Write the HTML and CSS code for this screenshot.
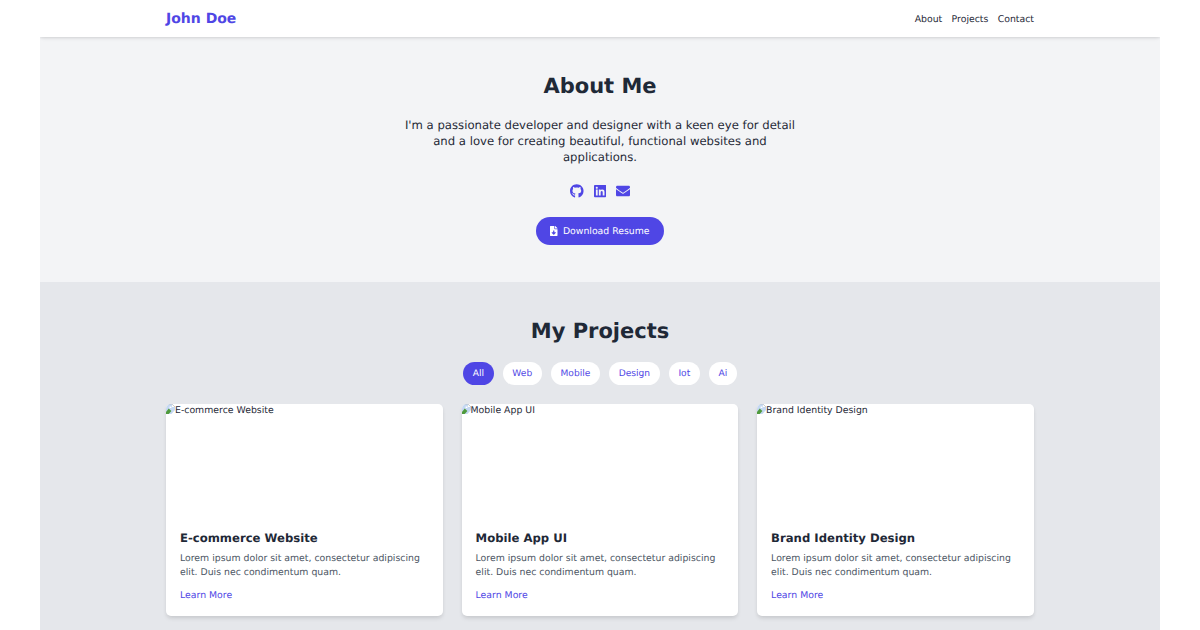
FILE: index.html
```html
<!DOCTYPE html>
<html lang="en">
<head>
    <meta charset="UTF-8">
    <meta name="viewport" content="width=device-width, initial-scale=1.0">
    <title>John Doe</title>
    <link rel="stylesheet" href="styles.css">
</head>
<body>
    <div class="page">
        <header class="navbar">
            <div class="container navbar-inner">
                <a class="brand" href="#">John Doe</a>
                <nav class="nav-links">
                    <a href="#">About</a>
                    <a href="#">Projects</a>
                    <a href="#">Contact</a>
                </nav>
            </div>
        </header>

        <section class="about">
            <h2 class="about-title">About Me</h2>
            <p class="about-text">I'm a passionate developer and designer with a keen eye for detail and a love for creating beautiful, functional websites and applications.</p>
            <div class="social">
                <a href="#"><svg class="icon-github" viewBox="0 0 496 512"><path d="M165.9 397.4c0 2-2.3 3.6-5.2 3.6-3.3 0-5.6-1.6-5.6-3.6 0-2 2.3-3.6 5.2-3.6 3-.3 5.6 1.3 5.6 3.6zm-31.1-4.5c-.7 2 1.3 4.3 4.3 4.9 2.6 1 5.6 0 6.2-2s-1.3-4.3-4.3-5.2c-2.6-.7-5.5.3-6.2 2.3zm44.2-1.7c-2.9.7-4.9 2.6-4.6 4.9.3 2 2.9 3.3 5.9 2.6 2.9-.7 4.9-2.6 4.6-4.6-.3-1.9-3-3.2-5.9-2.9zM244.8 8C106.1 8 0 113.3 0 252c0 110.9 69.8 205.8 169.5 239.2 12.8 2.3 17.3-5.6 17.3-12.1 0-6.2-.3-40.4-.3-61.4 0 0-70 15-84.7-29.8 0 0-11.4-29.1-27.8-36.6 0 0-22.9-15.7 1.6-16 0 0 24.9 2 38.6 25.8 21.9 38.6 58.6 27.5 72.9 20.9 2.3-16 8.8-27.1 16-33.7-55.9-6.2-112.3-14.3-112.3-110.5 0-27.5 7.6-41.3 23.6-58.9-2.6-6.5-11.1-33.3 2.6-67.9 20.9-6.5 69 27 69 27 20-5.6 41.5-8.5 62.8-8.5s42.8 2.9 62.8 8.5c0 0 48.1-33.6 69-27 13.7 34.7 5.2 61.4 2.6 67.9 16 17.7 25.8 31.5 25.8 58.9 0 96.5-58.9 104.2-114.8 110.5 9.2 7.9 17 22.9 17 46.4 0 33.7-.3 75.4-.3 83.6 0 6.5 4.6 14.4 17.3 12.1C428.2 457.8 496 362.9 496 252 496 113.3 383.5 8 244.8 8z"/></svg></a>
                <a href="#"><svg class="icon-linkedin" viewBox="0 0 448 512"><path d="M416 32H31.9C14.3 32 0 46.5 0 64.3v383.4C0 465.5 14.3 480 31.9 480H416c17.6 0 32-14.5 32-32.3V64.3c0-17.8-14.4-32.3-32-32.3zM135.4 416H69V202.2h66.5V416zm-33.2-243c-21.3 0-38.5-17.3-38.5-38.5S80.9 96 102.2 96c21.2 0 38.5 17.3 38.5 38.5 0 21.3-17.2 38.5-38.5 38.5zm282.1 243h-66.4V312c0-24.8-.5-56.7-34.5-56.7-34.6 0-39.9 27-39.9 54.9V416h-66.4V202.2h63.7v29.2h.9c8.9-16.8 30.6-34.5 62.9-34.5 67.2 0 79.7 44.3 79.7 101.9V416z"/></svg></a>
                <a href="#"><svg class="icon-mail" viewBox="0 0 512 512"><path d="M502.3 190.8c3.9-3.1 9.7-.2 9.7 4.7V400c0 26.5-21.5 48-48 48H48c-26.5 0-48-21.5-48-48V195.6c0-5 5.7-7.8 9.7-4.7 22.4 17.4 52.1 39.5 154.1 113.6 21.1 15.4 56.7 47.8 92.2 47.6 35.7.3 72-32.8 92.3-47.6 102-74.1 131.6-96.3 154-113.7zM256 320c23.2.4 56.6-29.2 73.4-41.4 132.7-96.3 142.8-104.7 173.4-128.7 5.8-4.5 9.2-11.5 9.2-18.9v-19c0-26.5-21.5-48-48-48H48C21.5 64 0 85.5 0 112v19c0 7.4 3.4 14.3 9.2 18.9 30.6 23.9 40.7 32.4 173.4 128.7 16.8 12.2 50.2 41.8 73.4 41.4z"/></svg></a>
            </div>
            <a class="resume-btn" href="#"><svg class="icon-file" viewBox="0 0 384 512"><path d="M224 136V0H24C10.7 0 0 10.7 0 24v464c0 13.3 10.7 24 24 24h336c13.3 0 24-10.7 24-24V160H248c-13.2 0-24-10.8-24-24zm76.45 211.36l-96.42 95.7c-6.65 6.61-17.39 6.61-24.04 0l-96.42-95.7C73.42 337.29 80.54 320 94.82 320H160v-80c0-8.84 7.16-16 16-16h32c8.84 0 16 7.16 16 16v80h65.18c14.28 0 21.4 17.29 11.27 27.36zM377 105L279.1 7c-4.5-4.5-10.6-7-17-7H256v128h128v-6.1c0-6.3-2.5-12.4-7-16.9z"/></svg><span class="resume-label">Download Resume</span></a>
        </section>

        <section class="projects">
            <h2 class="projects-title">My Projects</h2>
            <div class="filters">
                <button class="filter active">All</button>
                <button class="filter">Web</button>
                <button class="filter">Mobile</button>
                <button class="filter">Design</button>
                <button class="filter">Iot</button>
                <button class="filter">Ai</button>
            </div>
            <div class="container project-grid">
                <article class="card">
                    <div class="card-image"><svg class="broken" viewBox="0 0 10 10" preserveAspectRatio="none"><use href="#broken-img"/></svg>E-commerce Website</div>
                    <div class="card-body">
                        <h3>E-commerce Website</h3>
                        <p>Lorem ipsum dolor sit amet, consectetur adipiscing elit. Duis nec condimentum quam.</p>
                        <a href="#">Learn More</a>
                    </div>
                </article>
                <article class="card">
                    <div class="card-image"><svg class="broken" viewBox="0 0 10 10" preserveAspectRatio="none"><use href="#broken-img"/></svg>Mobile App UI</div>
                    <div class="card-body">
                        <h3>Mobile App UI</h3>
                        <p>Lorem ipsum dolor sit amet, consectetur adipiscing elit. Duis nec condimentum quam.</p>
                        <a href="#">Learn More</a>
                    </div>
                </article>
                <article class="card">
                    <div class="card-image"><svg class="broken" viewBox="0 0 10 10" preserveAspectRatio="none"><use href="#broken-img"/></svg>Brand Identity Design</div>
                    <div class="card-body">
                        <h3>Brand Identity Design</h3>
                        <p>Lorem ipsum dolor sit amet, consectetur adipiscing elit. Duis nec condimentum quam.</p>
                        <a href="#">Learn More</a>
                    </div>
                </article>
            </div>
        </section>
    </div>

    <!-- broken image glyph -->
    <svg class="defs" aria-hidden="true">
        <symbol id="broken-img" viewBox="0 0 10 10">
            <path d="M0 0h6.5l3.5 3v3L6 10H0z" fill="#c4d8f2"/>
            <path d="M6.5 0v3H10z" fill="#fff"/>
            <path d="M4 2.5h2v1.5H4z" fill="#fff"/>
            <path d="M0 8l3-3.5 3 2.5-3 3H0z" fill="#4f9a3c"/>
            <path d="M0 0h6.5l3.5 3" fill="none" stroke="#a8a8a8" stroke-width=".6"/>
        </symbol>
    </svg>
</body>
</html>
```

FILE: styles.css
```css
* {
    box-sizing: border-box;
}

body {
    margin: 0;
    background-color: white;
    color: #1f2937;
    font-family: "DejaVu Sans", sans-serif;
    font-size: 9.33px;
    text-rendering: geometricPrecision;
    overflow: hidden;
}

a {
    text-decoration: none;
}

.page {
    width: 1120px;
    margin: 0 auto;
    overflow: hidden;
}

.container {
    width: 868px;
    margin: 0 auto;
}

.defs {
    display: none;
}

/* navbar */
.navbar {
    position: relative;
    height: 37px;
    background-color: white;
    box-shadow: 0 2px 4px -1px rgba(0,0,0,0.1), 0 1px 2px rgba(0,0,0,0.06);
}

.navbar-inner {
    height: 37px;
    display: flex;
    align-items: center;
    justify-content: space-between;
}

.brand {
    color: #4f46e5;
    font-size: 14px;
    font-weight: bold;
}

.nav-links {
    display: flex;
    gap: 9.33px;
    padding-top: 1px;
}

.nav-links a {
    color: #1f2937;
}

/* about */
.about {
    height: 245px;
    background-color: #f3f4f6;
    padding-top: 35px;
    display: flex;
    flex-direction: column;
    align-items: center;
}

.about-title {
    margin: 0;
    font-size: 21px;
    line-height: 28px;
    font-weight: bold;
}

.about-text {
    width: 400px;
    margin: 17px 0 0;
    font-size: 11.67px;
    line-height: 16.2px;
    text-align: center;
}

.social {
    display: flex;
    align-items: center;
    gap: 10px;
    margin-top: 17px;
    height: 17px;
}

.social a {
    display: flex;
}

.social svg {
    height: 14px;
    fill: #4f46e5;
}

.resume-btn {
    display: flex;
    align-items: center;
    height: 28px;
    margin-top: 17px;
    padding: 0 14px;
    border-radius: 14px;
    background-color: #4f46e5;
    color: white;
}

.resume-label {
    padding-top: 1px;
}

.icon-file {
    height: 10px;
    margin-right: 5px;
    fill: white;
}

/* projects */
.projects {
    height: 348px;
    background-color: #e5e7eb;
    padding-top: 35px;
}

.projects-title {
    margin: 0;
    font-size: 21px;
    line-height: 28px;
    font-weight: bold;
    text-align: center;
}

.filters {
    display: flex;
    justify-content: center;
    gap: 9.33px;
    margin-top: 17px;
}

.filter {
    height: 23px;
    padding: 0 9.5px;
    border: none;
    border-radius: 12px;
    background-color: white;
    color: #4f46e5;
    font-family: inherit;
    font-size: 9.1px;
    text-rendering: geometricPrecision;
}

.filter.active {
    background-color: #4f46e5;
    color: white;
}

.project-grid {
    display: grid;
    grid-template-columns: repeat(3, 1fr);
    gap: 18.67px;
    margin-top: 19px;
}

.card {
    height: 212px;
    border-radius: 5px;
    background-color: white;
    box-shadow: 0 3px 5px -1px rgba(0,0,0,0.1), 0 2px 4px -1px rgba(0,0,0,0.06);
    overflow: hidden;
}

.card-image {
    height: 122px;
    display: flex;
    align-items: flex-start;
    line-height: 14px;
}

.broken {
    width: 9px;
    height: 10px;
    flex: none;
}

.card-body {
    padding: 4px 14px 0;
}

.card-body h3 {
    margin: 0;
    font-size: 11.67px;
    line-height: 17px;
    font-weight: bold;
}

.card-body p {
    margin: 5px 0 0;
    color: #4b5563;
    line-height: 14px;
}

.card-body a {
    display: block;
    margin-top: 9px;
    color: #4f46e5;
    line-height: 14px;
}
```
